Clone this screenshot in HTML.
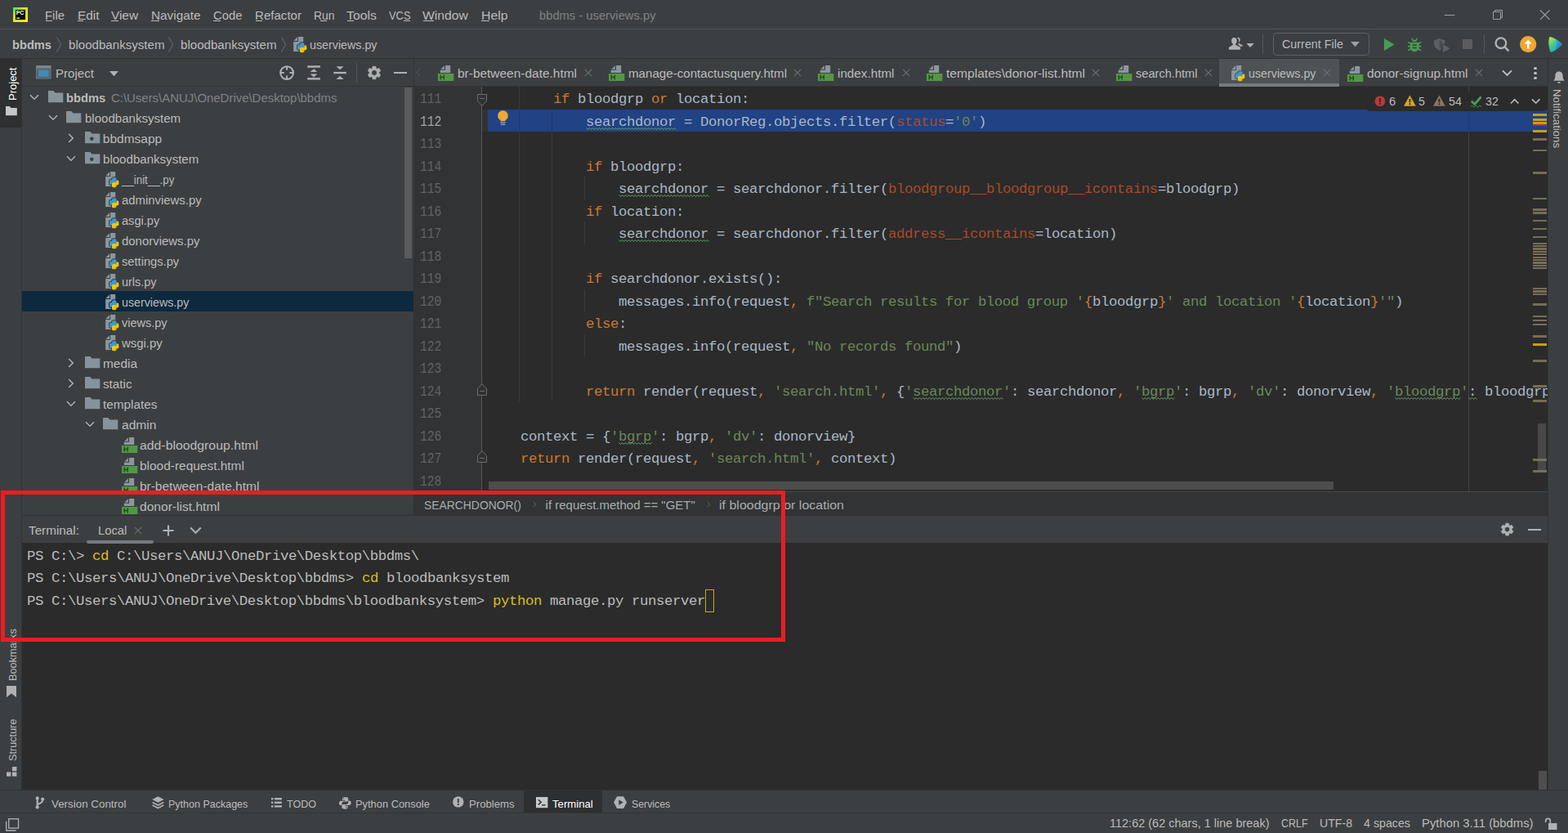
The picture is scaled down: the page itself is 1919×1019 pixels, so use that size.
<!DOCTYPE html>
<html lang="en"><head><meta charset="utf-8"><title>bbdms - userviews.py</title>
<style>
html,body{margin:0;padding:0;background:#3c3f41;}
body{width:1919px;height:1019px;overflow:hidden;font-family:"Liberation Sans",sans-serif;}
#root{position:relative;width:1919px;height:1019px;overflow:hidden;background:#3c3f41;}
#root>div,#root>svg,#root>span{position:absolute;}
.t{white-space:pre;line-height:20px;height:20px;transform-origin:0 50%;}
svg{overflow:visible;}
.c{position:absolute;white-space:pre;font-family:"Liberation Mono",monospace;font-size:17.4px;letter-spacing:-0.442px;line-height:27.5px;height:27.5px;}

</style></head>
<body>
<div id="root">
<div style="left:0px;top:35px;width:1919px;height:1px;background:#515355;"></div>
<div style="left:0px;top:71px;width:1919px;height:1px;background:#323232;"></div>
<div style="left:0px;top:72px;width:27px;height:894px;background:#3c3f41;"></div>
<div style="left:0px;top:72px;width:26px;height:83.5px;background:#2d2f30;"></div>
<div style="left:26px;top:72px;width:1px;height:894px;background:#323232;"></div>
<div style="left:1894px;top:72px;width:25px;height:894px;background:#3c3f41;"></div>
<div style="left:1894px;top:72px;width:1px;height:894px;background:#323232;"></div>
<div style="left:27px;top:105px;width:479px;height:1px;background:#323232;"></div>
<div style="left:506px;top:72px;width:1px;height:560px;background:#323232;"></div>
<div style="left:507px;top:106px;width:1387px;height:495px;background:#2b2b2b;"></div>
<div style="left:507px;top:106px;width:82.5px;height:495px;background:#313335;"></div>
<div style="left:507px;top:105px;width:1387px;height:1px;background:#323232;"></div>
<div style="left:507px;top:601px;width:1387px;height:1px;background:#4a4a4a;"></div>
<div style="left:507px;top:602px;width:1387px;height:29px;background:#313335;"></div>
<div style="left:27px;top:631px;width:1867px;height:33px;background:#3c3f41;"></div>
<div style="left:27px;top:630px;width:479px;height:1px;background:#323232;"></div>
<div style="left:27px;top:664px;width:1867px;height:302px;background:#2b2b2b;"></div>
<div style="left:0px;top:966px;width:1919px;height:1px;background:#323232;"></div>
<div style="left:0px;top:994px;width:1919px;height:1px;background:#323537;"></div>
<svg style="left:16px;top:9px" width="18" height="18" viewBox="0 0 18 18">
<defs><linearGradient id="pcg" x1="0" y1="0" x2="1" y2="1"><stop offset="0" stop-color="#3be06a"/><stop offset=".35" stop-color="#c8e628"/><stop offset="1" stop-color="#f5ee27"/></linearGradient></defs>
<rect width="18" height="18" fill="url(#pcg)"/><rect x="2.9" y="2.9" width="12.2" height="12.2" fill="#0a0a0a"/>
<text x="3.7" y="9.1" font-family="Liberation Sans, sans-serif" font-weight="bold" font-size="6.9" fill="#ffffff">PC</text>
<rect x="4.3" y="12.6" width="3.8" height="1.2" fill="#ffffff"/></svg>
<div style="left:56px;top:25px;width:8px;height:1px;background:#bbbbbb;"></div>
<div style="left:95px;top:25px;width:7px;height:1px;background:#bbbbbb;"></div>
<div style="left:136px;top:25px;width:9px;height:1px;background:#bbbbbb;"></div>
<div style="left:185px;top:25px;width:10px;height:1px;background:#bbbbbb;"></div>
<div style="left:261px;top:25px;width:9px;height:1px;background:#bbbbbb;"></div>
<div style="left:312.5px;top:25px;width:8px;height:1px;background:#bbbbbb;"></div>
<div style="left:391.5px;top:25px;width:8px;height:1px;background:#bbbbbb;"></div>
<div style="left:424.5px;top:25px;width:8px;height:1px;background:#bbbbbb;"></div>
<div style="left:494px;top:25px;width:7.5px;height:1px;background:#bbbbbb;"></div>
<div style="left:517.5px;top:25px;width:13px;height:1px;background:#bbbbbb;"></div>
<div style="left:589px;top:25px;width:10px;height:1px;background:#bbbbbb;"></div>
<svg style="left:1750px;top:0" width="169" height="35" viewBox="0 0 169 35" fill="none" stroke="#9da0a2" stroke-width="1"><path d="M17.8 18.5h12.6"/><path d="M77.5 14.5h9v9h-9z M79.5 14.5v-2h9v9h-2"/><path d="M135 12.300l11.500 11.500 M146.500 12.300l-11.500 11.500" stroke-width="1.2"/></svg>
<svg style="left:68.8px;top:45px" width="7" height="19" viewBox="0 0 7 19"><path d="M.5 .5L5.600 9.500L.5 18.500" fill="none" stroke="#6b6e70" stroke-width="1"/></svg>
<svg style="left:206.3px;top:45px" width="7" height="19" viewBox="0 0 7 19"><path d="M.5 .5L5.600 9.500L.5 18.500" fill="none" stroke="#6b6e70" stroke-width="1"/></svg>
<svg style="left:343.5px;top:45px" width="7" height="19" viewBox="0 0 7 19"><path d="M.5 .5L5.600 9.500L.5 18.500" fill="none" stroke="#6b6e70" stroke-width="1"/></svg>
<svg style="left:358.7px;top:45.1px" width="17" height="20" viewBox="0 0 17 20"><path d="M6.100 0H12.250V18H.15V5.900H6.100Z" fill="#8b979e"/><path d="M5.100 .2V4.900H.4Z" fill="#8b979e"/><g transform="translate(5.100 7.300) scale(.965 .99)"><g fill="#3c3f41" stroke="#3c3f41" stroke-width="1.900"><rect x="2.9" y="0" width="5.800" height="5.900" rx="1.700"/><rect x="0" y="2.900" width="8.700" height="3" rx="1.500"/><rect x="0" y="2.900" width="3.100" height="5.900" rx="1.500"/><rect x="2.900" y="6.100" width="5.800" height="5.900" rx="1.700"/><rect x="2.900" y="6.100" width="8.700" height="3" rx="1.500"/><rect x="8.500" y="3.200" width="3.100" height="5.900" rx="1.500"/></g><g fill="#3d9ad1"><rect x="2.9" y="0" width="5.800" height="5.900" rx="1.700"/><rect x="0" y="2.900" width="8.700" height="3" rx="1.500"/><rect x="0" y="2.900" width="3.100" height="5.900" rx="1.500"/></g><g fill="#f5c60c"><rect x="2.900" y="6.100" width="5.800" height="5.900" rx="1.700"/><rect x="2.900" y="6.100" width="8.700" height="3" rx="1.500"/><rect x="8.500" y="3.200" width="3.100" height="5.900" rx="1.500"/></g><circle cx="4.500" cy="1.500" r=".6" fill="#2a6f9c"/><circle cx="7.100" cy="10.500" r=".6" fill="#b38f00"/></g></svg>
<svg style="left:1503px;top:45px" width="33" height="17" viewBox="0 0 33 17">
<path d="M10.800 1.200c1.700-.9 3.700 0 4 2 .2 1.600-.5 2.800-1.300 3.700v1.200l4.300 2.100v1.600h-3.200l-2.500-2.300c1-1.400 1.400-3 1.100-5.100-.2-1.400-1.100-2.500-2.400-3.200z" fill="#a4a6a8"/>
<path d="M7.200.9c2.300 0 3.600 1.700 3.600 3.800 0 1.700-.7 3-1.600 3.900v1.300l5.300 2.600c.4.200.6.600.6 1v2.300H.9v-2.300c0-.4.200-.8.600-1l4.300-2.600V8.600C4.900 7.700 4.100 6.400 4.100 4.700 4.100 2.600 5.300.9 7.200.9z" fill="#afb1b3"/>
<path d="M22.400 8h9.400l-4.700 4.900z" fill="#afb1b3"/></svg>
<div style="left:1545px;top:42px;width:1px;height:24px;background:#555759;"></div>
<div style="left:1557.500px;top:40px;width:116.500px;height:26px;border:1px solid #5e6163;border-radius:4.500px;"></div>
<svg style="left:1653px;top:51px" width="11" height="7" viewBox="0 0 11 7"><path d="M0 0H11L5.500 6.300Z" fill="#9da0a2"/></svg>
<svg style="left:1693.700px;top:46.600px" width="13" height="15" viewBox="0 0 13 15"><path d="M0 0L12.500 7.450L0 14.900Z" fill="#499c54"/></svg>
<svg style="left:1723px;top:45.500px" width="17" height="18" viewBox="0 0 17 18">
<g fill="none" stroke="#499c54" stroke-width="1.500"><path d="M4.700 .6L6.600 3.400M11.700 .6L9.800 3.400"/><path d="M.3 5.600L3.600 7.400M16.100 5.600L12.800 7.400M0 10.600H3.400M16.400 10.600H13M.3 15.800L3.600 13.800M16.100 15.800L12.800 13.800" stroke-width="1.700"/></g>
<path d="M8.200 2.700c1.600 0 2.700 1 2.900 2.200H5.300c.2-1.200 1.300-2.200 2.900-2.200z" fill="#499c54"/>
<path d="M3.500 6h9.400c.4.900.6 2 .6 3.400v2.400c0 3.200-2.300 5.500-5.300 5.500s-5.300-2.300-5.300-5.500V9.400c0-1.400.2-2.500.6-3.400z" fill="#499c54"/>
<rect x="5.600" y="8.300" width="5.200" height="1.600" fill="#3c3f41"/><rect x="5.600" y="11.700" width="5.200" height="1.600" fill="#3c3f41"/></svg>
<svg style="left:1754.500px;top:46.500px" width="21" height="18" viewBox="0 0 21 18" fill="#5d6062">
<path d="M6.600 0L13.200 2.300V6.500H8.500V13.800L6.600 14.600C2.300 12.900 0 9.900 0 5.500V2.300Z"/>
<path d="M10.800 7L19.700 12.300L10.800 17.600Z"/><path d="M6.600 2v10.500c2.500-1 3.300-2.500 3.300-4V3.200z" fill="#4a4d4f"/></svg>
<div style="left:1789.5px;top:47.8px;width:12.8px;height:12.4px;background:#5b5d5f;"></div>
<div style="left:1816px;top:42px;width:1px;height:24px;background:#555759;"></div>
<svg style="left:1828px;top:44px" width="20" height="20" viewBox="0 0 20 20" fill="none" stroke="#afb1b3"><circle cx="8.900" cy="8.700" r="6.300" stroke-width="2.300"/><path d="M13.400 13.300L18.400 18.300" stroke-width="2.600"/></svg>
<svg style="left:1859.700px;top:43.700px" width="21" height="21" viewBox="0 0 21 21"><circle cx="10.200" cy="10.200" r="10.100" fill="#f0a732"/><path d="M10.200 4.800L14.700 9.600H11.400V15.400H9V9.600H5.700Z" fill="#ffffff"/></svg>
<svg style="left:1894px;top:44.500px" width="19" height="20" viewBox="0 0 19 20">
<defs><linearGradient id="lg1" x1="0" y1="0" x2="0.600" y2="1"><stop offset="0" stop-color="#c9e645"/><stop offset=".55" stop-color="#3fc88f"/><stop offset="1" stop-color="#19a8b8"/></linearGradient>
<linearGradient id="lg2" x1="0" y1="0" x2="1" y2="1"><stop offset="0" stop-color="#39b8e8"/><stop offset="1" stop-color="#1f5fc4"/></linearGradient></defs>
<path d="M2.500 0C7 .5 14 4.500 18 9.300 14 14 8 18 3.800 19 1.500 14 .3 6 2.500 0z" fill="url(#lg1)"/>
<path d="M9 3.200C12.500 4.800 16 7.300 18 9.300 15.500 12 12 15 9 16.500 11.500 12.500 11.500 7.500 9 3.200z" fill="url(#lg2)"/></svg>
<svg style="left:44px;top:80px" width="19" height="17" viewBox="0 0 19 17"><rect x=".5" y=".5" width="17.500" height="15.500" fill="#596168" stroke="#6e7980" stroke-width="1"/><rect x=".5" y=".5" width="17.500" height="3" fill="#7c8890"/><rect x="3" y="5.500" width="12.500" height="8.500" fill="#3e8cb5"/></svg>
<svg style="left:134px;top:86.500px" width="11" height="7" viewBox="0 0 11 7"><path d="M0 0H11L5.500 6.300Z" fill="#afb1b3"/></svg>
<svg style="left:341px;top:79px" width="21" height="21" viewBox="0 0 21 21" fill="none" stroke="#afb1b3" stroke-width="2"><circle cx="10.100" cy="10.100" r="7.900"/><path d="M10.100 2.200v4.600M10.100 13.400v4.600M2.200 10.100h4.600M13.400 10.100h4.600"/></svg>
<svg style="left:376px;top:80px" width="16" height="18" viewBox="0 0 16 18" fill="#afb1b3"><rect x=".2" y=".3" width="15.700" height="2.400"/><rect x=".2" y="15.100" width="15.700" height="2.400"/><path d="M8 4.300L12.400 8.100H3.600Z"/><path d="M8 14.400L12.400 10.600H3.600Z"/></svg>
<svg style="left:408px;top:80px" width="16" height="18" viewBox="0 0 16 18" fill="#afb1b3"><rect x=".3" y="7.900" width="15.500" height="2.300"/><path d="M8 5.200L12.500 1.200H3.500Z"/><path d="M8 13L12.500 17H3.500Z"/></svg>
<div style="left:436px;top:77px;width:1px;height:24px;background:#555759;"></div>
<svg style="left:449.0px;top:80.1px" width="18.0" height="18.0" viewBox="0 0 18.0 18.0"><path d="M6.89 3.49L7.13 1.22L10.87 1.22L11.11 3.49L12.71 4.41L14.80 3.49L16.67 6.73L14.83 8.08L14.83 9.92L16.67 11.27L14.80 14.51L12.71 13.59L11.11 14.51L10.87 16.78L7.13 16.78L6.89 14.51L5.29 13.59L3.20 14.51L1.33 11.27L3.17 9.92L3.17 8.08L1.33 6.73L3.20 3.49L5.29 4.41ZM5.60 9.0a3.4 3.4 0 1 0 6.8 0a3.4 3.4 0 1 0 -6.8 0Z" fill="#afb1b3" fill-rule="evenodd" stroke="#afb1b3" stroke-width="0.800" stroke-linejoin="round"/></svg>
<div style="left:482.4px;top:88px;width:15.5px;height:2.3px;background:#afb1b3;"></div>
<div style="left:27px;top:356px;width:479px;height:25px;background:#0d293e;"></div>
<svg style="left:36px;top:115.0px" width="12" height="8" viewBox="0 0 12 8"><path d="M1 1.200L6 6.200L11 1.200" fill="none" stroke="#afb1b3" stroke-width="1.500"/></svg>
<svg style="left:59px;top:111.0px" width="19" height="15" viewBox="0 0 19 15"><path d="M0 0H6.300L8.600 2.500H18.300V14.300H0Z" fill="#87939a"/></svg>
<svg style="left:58.8px;top:140.0px" width="12" height="8" viewBox="0 0 12 8"><path d="M1 1.200L6 6.200L11 1.200" fill="none" stroke="#afb1b3" stroke-width="1.500"/></svg>
<svg style="left:81px;top:136.0px" width="19" height="15" viewBox="0 0 19 15"><path d="M0 0H6.300L8.600 2.500H18.300V14.300H0Z" fill="#87939a"/></svg>
<svg style="left:83.2px;top:162.5px" width="8" height="12" viewBox="0 0 8 12"><path d="M1.200 1L6.200 6L1.200 11" fill="none" stroke="#afb1b3" stroke-width="1.500"/></svg>
<svg style="left:103.6px;top:161.0px" width="19" height="15" viewBox="0 0 19 15"><path d="M0 0H6.300L8.600 2.500H18.300V14.300H0Z" fill="#87939a"/><circle cx="8.300" cy="8.700" r="2.300" fill="#3c3f41"/></svg>
<svg style="left:80.9px;top:190.0px" width="12" height="8" viewBox="0 0 12 8"><path d="M1 1.200L6 6.200L11 1.200" fill="none" stroke="#afb1b3" stroke-width="1.500"/></svg>
<svg style="left:103.6px;top:186.0px" width="19" height="15" viewBox="0 0 19 15"><path d="M0 0H6.300L8.600 2.500H18.300V14.300H0Z" fill="#87939a"/><circle cx="8.300" cy="8.700" r="2.300" fill="#3c3f41"/></svg>
<svg style="left:128.7px;top:209.9px" width="17" height="20" viewBox="0 0 17 20"><path d="M6.100 0H12.250V18H.15V5.900H6.100Z" fill="#8b979e"/><path d="M5.100 .2V4.900H.4Z" fill="#8b979e"/><g transform="translate(5.100 7.300) scale(.965 .99)"><g fill="#3c3f41" stroke="#3c3f41" stroke-width="1.900"><rect x="2.9" y="0" width="5.800" height="5.900" rx="1.700"/><rect x="0" y="2.900" width="8.700" height="3" rx="1.500"/><rect x="0" y="2.900" width="3.100" height="5.900" rx="1.500"/><rect x="2.900" y="6.100" width="5.800" height="5.900" rx="1.700"/><rect x="2.900" y="6.100" width="8.700" height="3" rx="1.500"/><rect x="8.500" y="3.200" width="3.100" height="5.900" rx="1.500"/></g><g fill="#3d9ad1"><rect x="2.9" y="0" width="5.800" height="5.900" rx="1.700"/><rect x="0" y="2.900" width="8.700" height="3" rx="1.500"/><rect x="0" y="2.900" width="3.100" height="5.900" rx="1.500"/></g><g fill="#f5c60c"><rect x="2.900" y="6.100" width="5.800" height="5.900" rx="1.700"/><rect x="2.900" y="6.100" width="8.700" height="3" rx="1.500"/><rect x="8.500" y="3.200" width="3.100" height="5.900" rx="1.500"/></g><circle cx="4.500" cy="1.500" r=".6" fill="#2a6f9c"/><circle cx="7.100" cy="10.500" r=".6" fill="#b38f00"/></g></svg>
<svg style="left:128.7px;top:234.9px" width="17" height="20" viewBox="0 0 17 20"><path d="M6.100 0H12.250V18H.15V5.900H6.100Z" fill="#8b979e"/><path d="M5.100 .2V4.900H.4Z" fill="#8b979e"/><g transform="translate(5.100 7.300) scale(.965 .99)"><g fill="#3c3f41" stroke="#3c3f41" stroke-width="1.900"><rect x="2.9" y="0" width="5.800" height="5.900" rx="1.700"/><rect x="0" y="2.900" width="8.700" height="3" rx="1.500"/><rect x="0" y="2.900" width="3.100" height="5.900" rx="1.500"/><rect x="2.900" y="6.100" width="5.800" height="5.900" rx="1.700"/><rect x="2.900" y="6.100" width="8.700" height="3" rx="1.500"/><rect x="8.500" y="3.200" width="3.100" height="5.900" rx="1.500"/></g><g fill="#3d9ad1"><rect x="2.9" y="0" width="5.800" height="5.900" rx="1.700"/><rect x="0" y="2.900" width="8.700" height="3" rx="1.500"/><rect x="0" y="2.900" width="3.100" height="5.900" rx="1.500"/></g><g fill="#f5c60c"><rect x="2.900" y="6.100" width="5.800" height="5.900" rx="1.700"/><rect x="2.900" y="6.100" width="8.700" height="3" rx="1.500"/><rect x="8.500" y="3.200" width="3.100" height="5.900" rx="1.500"/></g><circle cx="4.500" cy="1.500" r=".6" fill="#2a6f9c"/><circle cx="7.100" cy="10.500" r=".6" fill="#b38f00"/></g></svg>
<svg style="left:128.7px;top:259.9px" width="17" height="20" viewBox="0 0 17 20"><path d="M6.100 0H12.250V18H.15V5.900H6.100Z" fill="#8b979e"/><path d="M5.100 .2V4.900H.4Z" fill="#8b979e"/><g transform="translate(5.100 7.300) scale(.965 .99)"><g fill="#3c3f41" stroke="#3c3f41" stroke-width="1.900"><rect x="2.9" y="0" width="5.800" height="5.900" rx="1.700"/><rect x="0" y="2.900" width="8.700" height="3" rx="1.500"/><rect x="0" y="2.900" width="3.100" height="5.900" rx="1.500"/><rect x="2.900" y="6.100" width="5.800" height="5.900" rx="1.700"/><rect x="2.900" y="6.100" width="8.700" height="3" rx="1.500"/><rect x="8.500" y="3.200" width="3.100" height="5.900" rx="1.500"/></g><g fill="#3d9ad1"><rect x="2.9" y="0" width="5.800" height="5.900" rx="1.700"/><rect x="0" y="2.900" width="8.700" height="3" rx="1.500"/><rect x="0" y="2.900" width="3.100" height="5.900" rx="1.500"/></g><g fill="#f5c60c"><rect x="2.900" y="6.100" width="5.800" height="5.900" rx="1.700"/><rect x="2.900" y="6.100" width="8.700" height="3" rx="1.500"/><rect x="8.500" y="3.200" width="3.100" height="5.900" rx="1.500"/></g><circle cx="4.500" cy="1.500" r=".6" fill="#2a6f9c"/><circle cx="7.100" cy="10.500" r=".6" fill="#b38f00"/></g></svg>
<svg style="left:128.7px;top:284.9px" width="17" height="20" viewBox="0 0 17 20"><path d="M6.100 0H12.250V18H.15V5.900H6.100Z" fill="#8b979e"/><path d="M5.100 .2V4.900H.4Z" fill="#8b979e"/><g transform="translate(5.100 7.300) scale(.965 .99)"><g fill="#3c3f41" stroke="#3c3f41" stroke-width="1.900"><rect x="2.9" y="0" width="5.800" height="5.900" rx="1.700"/><rect x="0" y="2.900" width="8.700" height="3" rx="1.500"/><rect x="0" y="2.900" width="3.100" height="5.900" rx="1.500"/><rect x="2.900" y="6.100" width="5.800" height="5.900" rx="1.700"/><rect x="2.900" y="6.100" width="8.700" height="3" rx="1.500"/><rect x="8.500" y="3.200" width="3.100" height="5.900" rx="1.500"/></g><g fill="#3d9ad1"><rect x="2.9" y="0" width="5.800" height="5.900" rx="1.700"/><rect x="0" y="2.900" width="8.700" height="3" rx="1.500"/><rect x="0" y="2.900" width="3.100" height="5.900" rx="1.500"/></g><g fill="#f5c60c"><rect x="2.900" y="6.100" width="5.800" height="5.900" rx="1.700"/><rect x="2.900" y="6.100" width="8.700" height="3" rx="1.500"/><rect x="8.500" y="3.200" width="3.100" height="5.900" rx="1.500"/></g><circle cx="4.500" cy="1.500" r=".6" fill="#2a6f9c"/><circle cx="7.100" cy="10.500" r=".6" fill="#b38f00"/></g></svg>
<svg style="left:128.7px;top:309.9px" width="17" height="20" viewBox="0 0 17 20"><path d="M6.100 0H12.250V18H.15V5.900H6.100Z" fill="#8b979e"/><path d="M5.100 .2V4.900H.4Z" fill="#8b979e"/><g transform="translate(5.100 7.300) scale(.965 .99)"><g fill="#3c3f41" stroke="#3c3f41" stroke-width="1.900"><rect x="2.9" y="0" width="5.800" height="5.900" rx="1.700"/><rect x="0" y="2.900" width="8.700" height="3" rx="1.500"/><rect x="0" y="2.900" width="3.100" height="5.900" rx="1.500"/><rect x="2.900" y="6.100" width="5.800" height="5.900" rx="1.700"/><rect x="2.900" y="6.100" width="8.700" height="3" rx="1.500"/><rect x="8.500" y="3.200" width="3.100" height="5.900" rx="1.500"/></g><g fill="#3d9ad1"><rect x="2.9" y="0" width="5.800" height="5.900" rx="1.700"/><rect x="0" y="2.900" width="8.700" height="3" rx="1.500"/><rect x="0" y="2.900" width="3.100" height="5.900" rx="1.500"/></g><g fill="#f5c60c"><rect x="2.900" y="6.100" width="5.800" height="5.900" rx="1.700"/><rect x="2.900" y="6.100" width="8.700" height="3" rx="1.500"/><rect x="8.500" y="3.200" width="3.100" height="5.900" rx="1.500"/></g><circle cx="4.500" cy="1.500" r=".6" fill="#2a6f9c"/><circle cx="7.100" cy="10.500" r=".6" fill="#b38f00"/></g></svg>
<svg style="left:128.7px;top:334.9px" width="17" height="20" viewBox="0 0 17 20"><path d="M6.100 0H12.250V18H.15V5.900H6.100Z" fill="#8b979e"/><path d="M5.100 .2V4.900H.4Z" fill="#8b979e"/><g transform="translate(5.100 7.300) scale(.965 .99)"><g fill="#3c3f41" stroke="#3c3f41" stroke-width="1.900"><rect x="2.9" y="0" width="5.800" height="5.900" rx="1.700"/><rect x="0" y="2.900" width="8.700" height="3" rx="1.500"/><rect x="0" y="2.900" width="3.100" height="5.900" rx="1.500"/><rect x="2.900" y="6.100" width="5.800" height="5.900" rx="1.700"/><rect x="2.900" y="6.100" width="8.700" height="3" rx="1.500"/><rect x="8.500" y="3.200" width="3.100" height="5.900" rx="1.500"/></g><g fill="#3d9ad1"><rect x="2.9" y="0" width="5.800" height="5.900" rx="1.700"/><rect x="0" y="2.900" width="8.700" height="3" rx="1.500"/><rect x="0" y="2.900" width="3.100" height="5.900" rx="1.500"/></g><g fill="#f5c60c"><rect x="2.900" y="6.100" width="5.800" height="5.900" rx="1.700"/><rect x="2.900" y="6.100" width="8.700" height="3" rx="1.500"/><rect x="8.500" y="3.200" width="3.100" height="5.900" rx="1.500"/></g><circle cx="4.500" cy="1.500" r=".6" fill="#2a6f9c"/><circle cx="7.100" cy="10.500" r=".6" fill="#b38f00"/></g></svg>
<svg style="left:128.7px;top:359.9px" width="17" height="20" viewBox="0 0 17 20"><path d="M6.100 0H12.250V18H.15V5.900H6.100Z" fill="#8b979e"/><path d="M5.100 .2V4.900H.4Z" fill="#8b979e"/><g transform="translate(5.100 7.300) scale(.965 .99)"><g fill="#0d293e" stroke="#0d293e" stroke-width="1.900"><rect x="2.9" y="0" width="5.800" height="5.900" rx="1.700"/><rect x="0" y="2.900" width="8.700" height="3" rx="1.500"/><rect x="0" y="2.900" width="3.100" height="5.900" rx="1.500"/><rect x="2.900" y="6.100" width="5.800" height="5.900" rx="1.700"/><rect x="2.900" y="6.100" width="8.700" height="3" rx="1.500"/><rect x="8.500" y="3.200" width="3.100" height="5.900" rx="1.500"/></g><g fill="#3d9ad1"><rect x="2.9" y="0" width="5.800" height="5.900" rx="1.700"/><rect x="0" y="2.900" width="8.700" height="3" rx="1.500"/><rect x="0" y="2.900" width="3.100" height="5.900" rx="1.500"/></g><g fill="#f5c60c"><rect x="2.900" y="6.100" width="5.800" height="5.900" rx="1.700"/><rect x="2.900" y="6.100" width="8.700" height="3" rx="1.500"/><rect x="8.500" y="3.200" width="3.100" height="5.900" rx="1.500"/></g><circle cx="4.500" cy="1.500" r=".6" fill="#2a6f9c"/><circle cx="7.100" cy="10.500" r=".6" fill="#b38f00"/></g></svg>
<svg style="left:128.7px;top:384.9px" width="17" height="20" viewBox="0 0 17 20"><path d="M6.100 0H12.250V18H.15V5.900H6.100Z" fill="#8b979e"/><path d="M5.100 .2V4.900H.4Z" fill="#8b979e"/><g transform="translate(5.100 7.300) scale(.965 .99)"><g fill="#3c3f41" stroke="#3c3f41" stroke-width="1.900"><rect x="2.9" y="0" width="5.800" height="5.900" rx="1.700"/><rect x="0" y="2.900" width="8.700" height="3" rx="1.500"/><rect x="0" y="2.900" width="3.100" height="5.900" rx="1.500"/><rect x="2.900" y="6.100" width="5.800" height="5.900" rx="1.700"/><rect x="2.900" y="6.100" width="8.700" height="3" rx="1.500"/><rect x="8.500" y="3.200" width="3.100" height="5.900" rx="1.500"/></g><g fill="#3d9ad1"><rect x="2.9" y="0" width="5.800" height="5.900" rx="1.700"/><rect x="0" y="2.900" width="8.700" height="3" rx="1.500"/><rect x="0" y="2.900" width="3.100" height="5.900" rx="1.500"/></g><g fill="#f5c60c"><rect x="2.900" y="6.100" width="5.800" height="5.900" rx="1.700"/><rect x="2.900" y="6.100" width="8.700" height="3" rx="1.500"/><rect x="8.500" y="3.200" width="3.100" height="5.900" rx="1.500"/></g><circle cx="4.500" cy="1.500" r=".6" fill="#2a6f9c"/><circle cx="7.100" cy="10.500" r=".6" fill="#b38f00"/></g></svg>
<svg style="left:128.7px;top:409.9px" width="17" height="20" viewBox="0 0 17 20"><path d="M6.100 0H12.250V18H.15V5.900H6.100Z" fill="#8b979e"/><path d="M5.100 .2V4.900H.4Z" fill="#8b979e"/><g transform="translate(5.100 7.300) scale(.965 .99)"><g fill="#3c3f41" stroke="#3c3f41" stroke-width="1.900"><rect x="2.9" y="0" width="5.800" height="5.900" rx="1.700"/><rect x="0" y="2.900" width="8.700" height="3" rx="1.500"/><rect x="0" y="2.900" width="3.100" height="5.900" rx="1.500"/><rect x="2.900" y="6.100" width="5.800" height="5.900" rx="1.700"/><rect x="2.900" y="6.100" width="8.700" height="3" rx="1.500"/><rect x="8.500" y="3.200" width="3.100" height="5.900" rx="1.500"/></g><g fill="#3d9ad1"><rect x="2.9" y="0" width="5.800" height="5.900" rx="1.700"/><rect x="0" y="2.900" width="8.700" height="3" rx="1.500"/><rect x="0" y="2.900" width="3.100" height="5.900" rx="1.500"/></g><g fill="#f5c60c"><rect x="2.900" y="6.100" width="5.800" height="5.900" rx="1.700"/><rect x="2.900" y="6.100" width="8.700" height="3" rx="1.500"/><rect x="8.500" y="3.200" width="3.100" height="5.900" rx="1.500"/></g><circle cx="4.500" cy="1.500" r=".6" fill="#2a6f9c"/><circle cx="7.100" cy="10.500" r=".6" fill="#b38f00"/></g></svg>
<svg style="left:83.2px;top:437.5px" width="8" height="12" viewBox="0 0 8 12"><path d="M1.200 1L6.200 6L1.200 11" fill="none" stroke="#afb1b3" stroke-width="1.500"/></svg>
<svg style="left:103.6px;top:436.0px" width="19" height="15" viewBox="0 0 19 15"><path d="M0 0H6.300L8.600 2.500H18.300V14.300H0Z" fill="#87939a"/></svg>
<svg style="left:83.2px;top:462.5px" width="8" height="12" viewBox="0 0 8 12"><path d="M1.200 1L6.200 6L1.200 11" fill="none" stroke="#afb1b3" stroke-width="1.500"/></svg>
<svg style="left:103.6px;top:461.0px" width="19" height="15" viewBox="0 0 19 15"><path d="M0 0H6.300L8.600 2.500H18.300V14.300H0Z" fill="#87939a"/></svg>
<svg style="left:80.9px;top:490.0px" width="12" height="8" viewBox="0 0 12 8"><path d="M1 1.200L6 6.200L11 1.200" fill="none" stroke="#afb1b3" stroke-width="1.500"/></svg>
<svg style="left:103.6px;top:486.0px" width="19" height="15" viewBox="0 0 19 15"><path d="M0 0H6.300L8.600 2.500H18.300V14.300H0Z" fill="#87939a"/></svg>
<svg style="left:103.8px;top:515.0px" width="12" height="8" viewBox="0 0 12 8"><path d="M1 1.200L6 6.200L11 1.200" fill="none" stroke="#afb1b3" stroke-width="1.500"/></svg>
<svg style="left:126px;top:511.0px" width="19" height="15" viewBox="0 0 19 15"><path d="M0 0H6.300L8.600 2.500H18.300V14.300H0Z" fill="#87939a"/></svg>
<svg style="left:149.2px;top:535.0px" width="20" height="20" viewBox="0 0 20 20"><path d="M9.100 0H15.200V9H2.800V5.850H9.100Z" fill="#8b979e"/><path d="M7.900 .2V4.800H3.300Z" fill="#8b979e"/><rect x="0" y="10" width="19.300" height="9" fill="#529843"/><path d="M3.200 11.600v5.900M7.300 11.600v5.900M3.200 14.500h4.100" stroke="#1f4d1c" stroke-width="1.400" fill="none"/></svg>
<svg style="left:149.2px;top:560.0px" width="20" height="20" viewBox="0 0 20 20"><path d="M9.100 0H15.200V9H2.800V5.850H9.100Z" fill="#8b979e"/><path d="M7.900 .2V4.800H3.300Z" fill="#8b979e"/><rect x="0" y="10" width="19.300" height="9" fill="#529843"/><path d="M3.200 11.600v5.900M7.300 11.600v5.900M3.200 14.500h4.100" stroke="#1f4d1c" stroke-width="1.400" fill="none"/></svg>
<svg style="left:149.2px;top:585.0px" width="20" height="20" viewBox="0 0 20 20"><path d="M9.100 0H15.200V9H2.800V5.850H9.100Z" fill="#8b979e"/><path d="M7.900 .2V4.800H3.300Z" fill="#8b979e"/><rect x="0" y="10" width="19.300" height="9" fill="#529843"/><path d="M3.200 11.600v5.900M7.300 11.600v5.900M3.200 14.500h4.100" stroke="#1f4d1c" stroke-width="1.400" fill="none"/></svg>
<svg style="left:149.2px;top:610.0px" width="20" height="20" viewBox="0 0 20 20"><path d="M9.100 0H15.200V9H2.800V5.850H9.100Z" fill="#8b979e"/><path d="M7.900 .2V4.800H3.300Z" fill="#8b979e"/><rect x="0" y="10" width="19.300" height="9" fill="#529843"/><path d="M3.200 11.600v5.900M7.300 11.600v5.900M3.200 14.500h4.100" stroke="#1f4d1c" stroke-width="1.400" fill="none"/></svg>
<div style="left:494.5px;top:107px;width:9.5px;height:209px;background:#595b5d;"></div>
<div style="left:1491.5px;top:72px;width:147.5px;height:33px;background:#4e5254;"></div>
<div style="left:1491.5px;top:102px;width:147.5px;height:3.5px;background:#747a80;"></div>
<svg style="left:535.9px;top:80px" width="20" height="20" viewBox="0 0 20 20"><path d="M9.100 0H15.200V9H2.800V5.850H9.100Z" fill="#8b979e"/><path d="M7.900 .2V4.800H3.300Z" fill="#8b979e"/><rect x="0" y="10" width="19.300" height="9" fill="#529843"/><path d="M3.200 11.600v5.900M7.300 11.600v5.900M3.200 14.500h4.100" stroke="#1f4d1c" stroke-width="1.400" fill="none"/></svg>
<svg style="left:714.5px;top:84px" width="10" height="10" viewBox="0 0 10 10"><path d="M.8 .8L9.200 9.200M9.200 .8L.8 9.200" stroke="#6e7173" stroke-width="1.100" fill="none"/></svg>
<svg style="left:745px;top:80px" width="20" height="20" viewBox="0 0 20 20"><path d="M9.100 0H15.200V9H2.800V5.850H9.100Z" fill="#8b979e"/><path d="M7.900 .2V4.800H3.300Z" fill="#8b979e"/><rect x="0" y="10" width="19.300" height="9" fill="#529843"/><path d="M3.200 11.600v5.900M7.300 11.600v5.900M3.200 14.500h4.100" stroke="#1f4d1c" stroke-width="1.400" fill="none"/></svg>
<svg style="left:971px;top:84px" width="10" height="10" viewBox="0 0 10 10"><path d="M.8 .8L9.200 9.200M9.200 .8L.8 9.200" stroke="#6e7173" stroke-width="1.100" fill="none"/></svg>
<svg style="left:1001px;top:80px" width="20" height="20" viewBox="0 0 20 20"><path d="M9.100 0H15.200V9H2.800V5.850H9.100Z" fill="#8b979e"/><path d="M7.900 .2V4.800H3.300Z" fill="#8b979e"/><rect x="0" y="10" width="19.300" height="9" fill="#529843"/><path d="M3.200 11.600v5.900M7.300 11.600v5.900M3.200 14.500h4.100" stroke="#1f4d1c" stroke-width="1.400" fill="none"/></svg>
<svg style="left:1103.5px;top:84px" width="10" height="10" viewBox="0 0 10 10"><path d="M.8 .8L9.200 9.200M9.200 .8L.8 9.200" stroke="#6e7173" stroke-width="1.100" fill="none"/></svg>
<svg style="left:1134px;top:80px" width="20" height="20" viewBox="0 0 20 20"><path d="M9.100 0H15.200V9H2.800V5.850H9.100Z" fill="#8b979e"/><path d="M7.900 .2V4.800H3.300Z" fill="#8b979e"/><rect x="0" y="10" width="19.300" height="9" fill="#529843"/><path d="M3.200 11.600v5.900M7.300 11.600v5.900M3.200 14.500h4.100" stroke="#1f4d1c" stroke-width="1.400" fill="none"/></svg>
<svg style="left:1336px;top:84px" width="10" height="10" viewBox="0 0 10 10"><path d="M.8 .8L9.200 9.200M9.200 .8L.8 9.200" stroke="#6e7173" stroke-width="1.100" fill="none"/></svg>
<svg style="left:1366px;top:80px" width="20" height="20" viewBox="0 0 20 20"><path d="M9.100 0H15.200V9H2.800V5.850H9.100Z" fill="#8b979e"/><path d="M7.900 .2V4.800H3.300Z" fill="#8b979e"/><rect x="0" y="10" width="19.300" height="9" fill="#529843"/><path d="M3.200 11.600v5.900M7.300 11.600v5.900M3.200 14.500h4.100" stroke="#1f4d1c" stroke-width="1.400" fill="none"/></svg>
<svg style="left:1474px;top:84px" width="10" height="10" viewBox="0 0 10 10"><path d="M.8 .8L9.200 9.200M9.200 .8L.8 9.200" stroke="#6e7173" stroke-width="1.100" fill="none"/></svg>
<svg style="left:1506.5px;top:80px" width="17" height="20" viewBox="0 0 17 20"><path d="M6.100 0H12.250V18H.15V5.900H6.100Z" fill="#8b979e"/><path d="M5.100 .2V4.900H.4Z" fill="#8b979e"/><g transform="translate(5.100 7.300) scale(.965 .99)"><g fill="#4e5254" stroke="#4e5254" stroke-width="1.900"><rect x="2.9" y="0" width="5.800" height="5.900" rx="1.700"/><rect x="0" y="2.900" width="8.700" height="3" rx="1.500"/><rect x="0" y="2.900" width="3.100" height="5.900" rx="1.500"/><rect x="2.900" y="6.100" width="5.800" height="5.900" rx="1.700"/><rect x="2.900" y="6.100" width="8.700" height="3" rx="1.500"/><rect x="8.500" y="3.200" width="3.100" height="5.900" rx="1.500"/></g><g fill="#3d9ad1"><rect x="2.9" y="0" width="5.800" height="5.900" rx="1.700"/><rect x="0" y="2.900" width="8.700" height="3" rx="1.500"/><rect x="0" y="2.900" width="3.100" height="5.900" rx="1.500"/></g><g fill="#f5c60c"><rect x="2.900" y="6.100" width="5.800" height="5.900" rx="1.700"/><rect x="2.900" y="6.100" width="8.700" height="3" rx="1.500"/><rect x="8.500" y="3.200" width="3.100" height="5.900" rx="1.500"/></g><circle cx="4.500" cy="1.500" r=".6" fill="#2a6f9c"/><circle cx="7.100" cy="10.500" r=".6" fill="#b38f00"/></g></svg>
<svg style="left:1619px;top:84px" width="10" height="10" viewBox="0 0 10 10"><path d="M.8 .8L9.200 9.200M9.200 .8L.8 9.200" stroke="#6e7173" stroke-width="1.100" fill="none"/></svg>
<svg style="left:1649px;top:81px" width="20" height="20" viewBox="0 0 20 20"><path d="M9.100 0H15.200V9H2.800V5.850H9.100Z" fill="#8b979e"/><path d="M7.900 .2V4.800H3.300Z" fill="#8b979e"/><rect x="0" y="10" width="19.300" height="9" fill="#529843"/><path d="M3.200 11.600v5.900M7.300 11.600v5.900M3.200 14.500h4.100" stroke="#1f4d1c" stroke-width="1.400" fill="none"/></svg>
<svg style="left:1805px;top:84px" width="10" height="10" viewBox="0 0 10 10"><path d="M.8 .8L9.200 9.200M9.200 .8L.8 9.200" stroke="#6e7173" stroke-width="1.100" fill="none"/></svg>
<svg style="left:509px;top:83px" width="6" height="11" viewBox="0 0 6 11"><path d="M5 .8L1 5.500L5 10.200" stroke="#505355" stroke-width="1.200" fill="none"/></svg>
<svg style="left:1837.500px;top:84.500px" width="13" height="9" viewBox="0 0 13 9"><path d="M1 1.300L6.500 6.800L12 1.300" stroke="#c0c2c4" stroke-width="1.900" fill="none"/></svg>
<div style="left:1877.300px;top:81.5px;width:3.400px;height:3.400px;border-radius:50%;background:#c0c2c4"></div>
<div style="left:1877.300px;top:87.8px;width:3.400px;height:3.400px;border-radius:50%;background:#c0c2c4"></div>
<div style="left:1877.300px;top:94.1px;width:3.400px;height:3.400px;border-radius:50%;background:#c0c2c4"></div>
<div style="left:597px;top:134.0px;width:1297px;height:27.0px;background:#214283;"></div>
<div style="left:590px;top:134.0px;width:7px;height:27.0px;background:#323232;"></div>
<div style="left:1797px;top:106px;width:1px;height:495px;background:#444444;"></div>
<div style="left:1797px;top:134.0px;width:1px;height:27.0px;background:#1d3a73;"></div>
<div style="left:589px;top:106px;width:1px;height:495px;background:#555759;"></div>
<div style="left:635px;top:106.0px;width:1px;height:385.0px;background:#3b3b3b;"></div>
<div style="left:675px;top:133.5px;width:1px;height:357.5px;background:#3b3b3b;"></div>
<div style="left:635px;top:134.0px;width:1px;height:27.0px;background:#1b376f;"></div>
<div style="left:675px;top:134.0px;width:1px;height:27.0px;background:#1b376f;"></div>
<div style="left:715px;top:216.0px;width:1px;height:27.5px;background:#3b3b3b;"></div>
<div style="left:715px;top:271.0px;width:1px;height:27.5px;background:#3b3b3b;"></div>
<div style="left:715px;top:353.5px;width:1px;height:27.5px;background:#3b3b3b;"></div>
<div style="left:715px;top:408.5px;width:1px;height:27.5px;background:#3b3b3b;"></div>
<svg style="left:584px;top:114.55px" width="12" height="15" viewBox="0 0 12 15"><path d="M.5 .5H11.500V8.500L6 14.500L.5 8.500Z" fill="#2f3133" stroke="#6a6d6f" stroke-width="1"/><path d="M3 5.5H9" stroke="#6a6d6f" stroke-width="1"/></svg>
<svg style="left:584px;top:468.95px" width="12" height="15" viewBox="0 0 12 15"><path d="M.5 14.500H11.500V6.500L6 .5L.5 6.500Z" fill="#2f3133" stroke="#6a6d6f" stroke-width="1"/><path d="M3 9.5H9" stroke="#6a6d6f" stroke-width="1"/></svg>
<svg style="left:584px;top:551.45px" width="12" height="15" viewBox="0 0 12 15"><path d="M.5 14.500H11.500V6.500L6 .5L.5 6.500Z" fill="#2f3133" stroke="#6a6d6f" stroke-width="1"/><path d="M3 9.5H9" stroke="#6a6d6f" stroke-width="1"/></svg>
<svg style="left:607.500px;top:134.50px" width="15" height="19" viewBox="0 0 15 19"><path d="M7.500 .3a6.300 6.300 0 0 1 3.500 11.500c-.5.400-.7.900-.7 1.500H4.700c0-.6-.2-1.100-.7-1.500A6.300 6.300 0 0 1 7.500.3z" fill="#f0a732"/><rect x="4.300" y="14.300" width="6.400" height="1.300" fill="#9aa7b0"/><rect x="4.800" y="16.600" width="5.400" height="1.300" fill="#9aa7b0"/></svg>
<div style="left:0;top:0;width:1894px;height:601px;overflow:hidden;background:none;pointer-events:none"><div style="position:absolute;left:0;top:0"><span class="c" style="left:677.0px;top:108.40px;color:#cc7832">if</span><span class="c" style="left:707.0px;top:108.40px;color:#a9b7c6">bloodgrp</span><span class="c" style="left:797.0px;top:108.40px;color:#cc7832">or</span><span class="c" style="left:827.0px;top:108.40px;color:#a9b7c6">location:</span><svg style="position:absolute;left:717.0px;top:156px" width="110" height="4" viewBox="0 0 110 4"><path d="M0.5 0.5L2.5 2.5L4.5 0.5L6.5 2.5L8.5 0.5L10.5 2.5L12.5 0.5L14.5 2.5L16.5 0.5L18.5 2.5L20.5 0.5L22.5 2.5L24.5 0.5L26.5 2.5L28.5 0.5L30.5 2.5L32.5 0.5L34.5 2.5L36.5 0.5L38.5 2.5L40.5 0.5L42.5 2.5L44.5 0.5L46.5 2.5L48.5 0.5L50.5 2.5L52.5 0.5L54.5 2.5L56.5 0.5L58.5 2.5L60.5 0.5L62.5 2.5L64.5 0.5L66.5 2.5L68.5 0.5L70.5 2.5L72.5 0.5L74.5 2.5L76.5 0.5L78.5 2.5L80.5 0.5L82.5 2.5L84.5 0.5L86.5 2.5L88.5 0.5L90.5 2.5L92.5 0.5L94.5 2.5L96.5 0.5L98.5 2.5L100.5 0.5L102.5 2.5L104.5 0.5L106.5 2.5L108.5 0.5L110.5 2.5" fill="none" stroke="#66a869" stroke-width="1"/></svg><span class="c" style="left:717.0px;top:135.90px;color:#a9b7c6">searchdonor</span><span class="c" style="left:837.0px;top:135.90px;color:#a9b7c6">= DonorReg.objects.filter(</span><span class="c" style="left:1097.0px;top:135.90px;color:#aa4926">status</span><span class="c" style="left:1157.0px;top:135.90px;color:#a9b7c6">=</span><span class="c" style="left:1167.0px;top:135.90px;color:#6a8759">&#x27;0&#x27;</span><span class="c" style="left:1197.0px;top:135.90px;color:#a9b7c6">)</span><span class="c" style="left:717.0px;top:190.90px;color:#cc7832">if</span><span class="c" style="left:747.0px;top:190.90px;color:#a9b7c6">bloodgrp:</span><svg style="position:absolute;left:757.0px;top:238px" width="110" height="4" viewBox="0 0 110 4"><path d="M0.5 0.5L2.5 2.5L4.5 0.5L6.5 2.5L8.5 0.5L10.5 2.5L12.5 0.5L14.5 2.5L16.5 0.5L18.5 2.5L20.5 0.5L22.5 2.5L24.5 0.5L26.5 2.5L28.5 0.5L30.5 2.5L32.5 0.5L34.5 2.5L36.5 0.5L38.5 2.5L40.5 0.5L42.5 2.5L44.5 0.5L46.5 2.5L48.5 0.5L50.5 2.5L52.5 0.5L54.5 2.5L56.5 0.5L58.5 2.5L60.5 0.5L62.5 2.5L64.5 0.5L66.5 2.5L68.5 0.5L70.5 2.5L72.5 0.5L74.5 2.5L76.5 0.5L78.5 2.5L80.5 0.5L82.5 2.5L84.5 0.5L86.5 2.5L88.5 0.5L90.5 2.5L92.5 0.5L94.5 2.5L96.5 0.5L98.5 2.5L100.5 0.5L102.5 2.5L104.5 0.5L106.5 2.5L108.5 0.5L110.5 2.5" fill="none" stroke="#66a869" stroke-width="1"/></svg><span class="c" style="left:757.0px;top:218.40px;color:#a9b7c6">searchdonor</span><span class="c" style="left:877.0px;top:218.40px;color:#a9b7c6">= searchdonor.filter(</span><span class="c" style="left:1087.0px;top:218.40px;color:#aa4926">bloodgroup__bloodgroup__icontains</span><span class="c" style="left:1417.0px;top:218.40px;color:#a9b7c6">=bloodgrp)</span><span class="c" style="left:717.0px;top:245.90px;color:#cc7832">if</span><span class="c" style="left:747.0px;top:245.90px;color:#a9b7c6">location:</span><svg style="position:absolute;left:757.0px;top:293px" width="110" height="4" viewBox="0 0 110 4"><path d="M0.5 0.5L2.5 2.5L4.5 0.5L6.5 2.5L8.5 0.5L10.5 2.5L12.5 0.5L14.5 2.5L16.5 0.5L18.5 2.5L20.5 0.5L22.5 2.5L24.5 0.5L26.5 2.5L28.5 0.5L30.5 2.5L32.5 0.5L34.5 2.5L36.5 0.5L38.5 2.5L40.5 0.5L42.5 2.5L44.5 0.5L46.5 2.5L48.5 0.5L50.5 2.5L52.5 0.5L54.5 2.5L56.5 0.5L58.5 2.5L60.5 0.5L62.5 2.5L64.5 0.5L66.5 2.5L68.5 0.5L70.5 2.5L72.5 0.5L74.5 2.5L76.5 0.5L78.5 2.5L80.5 0.5L82.5 2.5L84.5 0.5L86.5 2.5L88.5 0.5L90.5 2.5L92.5 0.5L94.5 2.5L96.5 0.5L98.5 2.5L100.5 0.5L102.5 2.5L104.5 0.5L106.5 2.5L108.5 0.5L110.5 2.5" fill="none" stroke="#66a869" stroke-width="1"/></svg><span class="c" style="left:757.0px;top:273.40px;color:#a9b7c6">searchdonor</span><span class="c" style="left:877.0px;top:273.40px;color:#a9b7c6">= searchdonor.filter(</span><span class="c" style="left:1087.0px;top:273.40px;color:#aa4926">address__icontains</span><span class="c" style="left:1267.0px;top:273.40px;color:#a9b7c6">=location)</span><span class="c" style="left:717.0px;top:328.40px;color:#cc7832">if</span><span class="c" style="left:747.0px;top:328.40px;color:#a9b7c6">searchdonor.exists():</span><span class="c" style="left:757.0px;top:355.90px;color:#a9b7c6">messages.info(request</span><span class="c" style="left:967.0px;top:355.90px;color:#cc7832">,</span><span class="c" style="left:987.0px;top:355.90px;color:#6a8759">f&quot;Search results for blood group &#x27;</span><span class="c" style="left:1327.0px;top:355.90px;color:#cc7832">{</span><span class="c" style="left:1337.0px;top:355.90px;color:#a9b7c6">bloodgrp</span><span class="c" style="left:1417.0px;top:355.90px;color:#cc7832">}</span><span class="c" style="left:1427.0px;top:355.90px;color:#6a8759">&#x27; and location &#x27;</span><span class="c" style="left:1587.0px;top:355.90px;color:#cc7832">{</span><span class="c" style="left:1597.0px;top:355.90px;color:#a9b7c6">location</span><span class="c" style="left:1677.0px;top:355.90px;color:#cc7832">}</span><span class="c" style="left:1687.0px;top:355.90px;color:#6a8759">&#x27;&quot;</span><span class="c" style="left:1707.0px;top:355.90px;color:#a9b7c6">)</span><span class="c" style="left:717.0px;top:383.40px;color:#cc7832">else</span><span class="c" style="left:757.0px;top:383.40px;color:#a9b7c6">:</span><span class="c" style="left:757.0px;top:410.90px;color:#a9b7c6">messages.info(request</span><span class="c" style="left:967.0px;top:410.90px;color:#cc7832">,</span><span class="c" style="left:987.0px;top:410.90px;color:#6a8759">&quot;No records found&quot;</span><span class="c" style="left:1167.0px;top:410.90px;color:#a9b7c6">)</span><span class="c" style="left:717.0px;top:465.90px;color:#cc7832">return</span><span class="c" style="left:787.0px;top:465.90px;color:#a9b7c6">render(request</span><span class="c" style="left:927.0px;top:465.90px;color:#cc7832">,</span><span class="c" style="left:947.0px;top:465.90px;color:#6a8759">&#x27;search.html&#x27;</span><span class="c" style="left:1077.0px;top:465.90px;color:#cc7832">,</span><span class="c" style="left:1097.0px;top:465.90px;color:#a9b7c6">{</span><span class="c" style="left:1107.0px;top:465.90px;color:#6a8759">&#x27;</span><svg style="position:absolute;left:1117.0px;top:486px" width="110" height="4" viewBox="0 0 110 4"><path d="M0.5 0.5L2.5 2.5L4.5 0.5L6.5 2.5L8.5 0.5L10.5 2.5L12.5 0.5L14.5 2.5L16.5 0.5L18.5 2.5L20.5 0.5L22.5 2.5L24.5 0.5L26.5 2.5L28.5 0.5L30.5 2.5L32.5 0.5L34.5 2.5L36.5 0.5L38.5 2.5L40.5 0.5L42.5 2.5L44.5 0.5L46.5 2.5L48.5 0.5L50.5 2.5L52.5 0.5L54.5 2.5L56.5 0.5L58.5 2.5L60.5 0.5L62.5 2.5L64.5 0.5L66.5 2.5L68.5 0.5L70.5 2.5L72.5 0.5L74.5 2.5L76.5 0.5L78.5 2.5L80.5 0.5L82.5 2.5L84.5 0.5L86.5 2.5L88.5 0.5L90.5 2.5L92.5 0.5L94.5 2.5L96.5 0.5L98.5 2.5L100.5 0.5L102.5 2.5L104.5 0.5L106.5 2.5L108.5 0.5L110.5 2.5" fill="none" stroke="#66a869" stroke-width="1"/></svg><span class="c" style="left:1117.0px;top:465.90px;color:#6a8759">searchdonor</span><span class="c" style="left:1227.0px;top:465.90px;color:#6a8759">&#x27;</span><span class="c" style="left:1237.0px;top:465.90px;color:#a9b7c6">: searchdonor</span><span class="c" style="left:1367.0px;top:465.90px;color:#cc7832">,</span><span class="c" style="left:1387.0px;top:465.90px;color:#6a8759">&#x27;</span><svg style="position:absolute;left:1397.0px;top:486px" width="40" height="4" viewBox="0 0 40 4"><path d="M0.5 0.5L2.5 2.5L4.5 0.5L6.5 2.5L8.5 0.5L10.5 2.5L12.5 0.5L14.5 2.5L16.5 0.5L18.5 2.5L20.5 0.5L22.5 2.5L24.5 0.5L26.5 2.5L28.5 0.5L30.5 2.5L32.5 0.5L34.5 2.5L36.5 0.5L38.5 2.5L40.5 0.5" fill="none" stroke="#66a869" stroke-width="1"/></svg><span class="c" style="left:1397.0px;top:465.90px;color:#6a8759">bgrp</span><span class="c" style="left:1437.0px;top:465.90px;color:#6a8759">&#x27;</span><span class="c" style="left:1447.0px;top:465.90px;color:#a9b7c6">: bgrp</span><span class="c" style="left:1507.0px;top:465.90px;color:#cc7832">,</span><span class="c" style="left:1527.0px;top:465.90px;color:#6a8759">&#x27;dv&#x27;</span><span class="c" style="left:1567.0px;top:465.90px;color:#a9b7c6">: donorview</span><span class="c" style="left:1677.0px;top:465.90px;color:#cc7832">,</span><span class="c" style="left:1697.0px;top:465.90px;color:#6a8759">&#x27;</span><svg style="position:absolute;left:1707.0px;top:486px" width="80" height="4" viewBox="0 0 80 4"><path d="M0.5 0.5L2.5 2.5L4.5 0.5L6.5 2.5L8.5 0.5L10.5 2.5L12.5 0.5L14.5 2.5L16.5 0.5L18.5 2.5L20.5 0.5L22.5 2.5L24.5 0.5L26.5 2.5L28.5 0.5L30.5 2.5L32.5 0.5L34.5 2.5L36.5 0.5L38.5 2.5L40.5 0.5L42.5 2.5L44.5 0.5L46.5 2.5L48.5 0.5L50.5 2.5L52.5 0.5L54.5 2.5L56.5 0.5L58.5 2.5L60.5 0.5L62.5 2.5L64.5 0.5L66.5 2.5L68.5 0.5L70.5 2.5L72.5 0.5L74.5 2.5L76.5 0.5L78.5 2.5L80.5 0.5" fill="none" stroke="#66a869" stroke-width="1"/></svg><span class="c" style="left:1707.0px;top:465.90px;color:#6a8759">bloodgrp</span><span class="c" style="left:1787.0px;top:465.90px;color:#6a8759">&#x27;</span><svg style="position:absolute;left:1797.0px;top:486px" width="10" height="4" viewBox="0 0 10 4"><path d="M0.5 0.5L2.5 2.5L4.5 0.5L6.5 2.5L8.5 0.5L10.5 2.5" fill="none" stroke="#66a869" stroke-width="1"/></svg><span class="c" style="left:1797.0px;top:465.90px;color:#a9b7c6">:</span><span class="c" style="left:1817.0px;top:465.90px;color:#a9b7c6">bloodgrp</span><span class="c" style="left:637.0px;top:520.90px;color:#a9b7c6">context = {</span><span class="c" style="left:747.0px;top:520.90px;color:#6a8759">&#x27;</span><svg style="position:absolute;left:757.0px;top:541px" width="40" height="4" viewBox="0 0 40 4"><path d="M0.5 0.5L2.5 2.5L4.5 0.5L6.5 2.5L8.5 0.5L10.5 2.5L12.5 0.5L14.5 2.5L16.5 0.5L18.5 2.5L20.5 0.5L22.5 2.5L24.5 0.5L26.5 2.5L28.5 0.5L30.5 2.5L32.5 0.5L34.5 2.5L36.5 0.5L38.5 2.5L40.5 0.5" fill="none" stroke="#66a869" stroke-width="1"/></svg><span class="c" style="left:757.0px;top:520.90px;color:#6a8759">bgrp</span><span class="c" style="left:797.0px;top:520.90px;color:#6a8759">&#x27;</span><span class="c" style="left:807.0px;top:520.90px;color:#a9b7c6">: bgrp</span><span class="c" style="left:867.0px;top:520.90px;color:#cc7832">,</span><span class="c" style="left:887.0px;top:520.90px;color:#6a8759">&#x27;dv&#x27;</span><span class="c" style="left:927.0px;top:520.90px;color:#a9b7c6">: donorview}</span><span class="c" style="left:637.0px;top:548.40px;color:#cc7832">return</span><span class="c" style="left:707.0px;top:548.40px;color:#a9b7c6">render(request</span><span class="c" style="left:847.0px;top:548.40px;color:#cc7832">,</span><span class="c" style="left:867.0px;top:548.40px;color:#6a8759">&#x27;search.html&#x27;</span><span class="c" style="left:997.0px;top:548.40px;color:#cc7832">,</span><span class="c" style="left:1017.0px;top:548.40px;color:#a9b7c6">context)</span></div></div>
<div style="left:1671px;top:106px;width:223px;height:30px;background:#2b2b2b;border-radius:0 0 5px 6px;"></div>
<div style="left:1797px;top:106px;width:1px;height:6px;background:#444444;"></div>
<svg style="left:1682px;top:116.500px" width="14" height="14" viewBox="0 0 14 14"><circle cx="6.900" cy="6.700" r="6.300" fill="#bb3a36"/><rect x="5.900" y="3" width="2" height="4.800" fill="#2b2b2b"/><rect x="5.900" y="8.800" width="2" height="2" fill="#2b2b2b"/></svg>
<svg style="left:1717.6px;top:115.500px" width="16" height="15" viewBox="0 0 16 15"><path d="M7.400 .4L14.800 13.700H0Z" fill="#d9a71e"/><rect x="6.500" y="5" width="1.900" height="4.300" fill="#2b2b2b"/><rect x="6.500" y="10.300" width="1.900" height="1.900" fill="#2b2b2b"/></svg>
<svg style="left:1753.5px;top:115.500px" width="16" height="15" viewBox="0 0 16 15"><path d="M7.400 .4L14.800 13.700H0Z" fill="#857a63"/><rect x="6.500" y="5" width="1.900" height="4.300" fill="#2b2b2b"/><rect x="6.500" y="10.300" width="1.900" height="1.900" fill="#2b2b2b"/></svg>
<svg style="left:1798.500px;top:116.500px" width="16" height="16" viewBox="0 0 16 16" fill="none"><path d="M1.800 6.800L5.800 10.300L13.600 1.500" stroke="#49a155" stroke-width="2.700"/><path d="M.6 13.500L2.700 12L5 14.300L7.300 12L9.600 14.300L11.900 12L14 13.500" stroke="#3f8f49" stroke-width="1"/></svg>
<svg style="left:1847.500px;top:119.500px" width="12" height="8" viewBox="0 0 12 8"><path d="M1 6.500L5.700 1.700L10.400 6.500" stroke="#b4b6b8" stroke-width="1.700" fill="none"/></svg>
<svg style="left:1873.500px;top:120px" width="12" height="8" viewBox="0 0 12 8"><path d="M1 1.300L5.700 6.100L10.400 1.300" stroke="#b4b6b8" stroke-width="1.700" fill="none"/></svg>
<div style="left:1876px;top:139px;width:17px;height:3px;background:#c79e1c;"></div>
<div style="left:1876px;top:145.4px;width:17px;height:2.6px;background:#c79e1c;"></div>
<div style="left:1876px;top:149.1px;width:17px;height:2.5px;background:#c79e1c;"></div>
<div style="left:1876px;top:151.7px;width:17px;height:2.4px;background:#b0322c;"></div>
<div style="left:1876px;top:159.2px;width:17px;height:2.8px;background:#c79e1c;"></div>
<div style="left:1876px;top:169.2px;width:17px;height:2.6px;background:#756d56;"></div>
<div style="left:1876px;top:182.7px;width:17px;height:2.6px;background:#756d56;"></div>
<div style="left:1876px;top:210.3px;width:17px;height:2.6px;background:#756d56;"></div>
<div style="left:1876px;top:241.5px;width:17px;height:2.6px;background:#756d56;"></div>
<div style="left:1876px;top:255.2px;width:17px;height:2.5px;background:#756d56;"></div>
<div style="left:1876px;top:259px;width:17px;height:2.5px;background:#756d56;"></div>
<div style="left:1876px;top:268.8px;width:17px;height:2.6px;background:#756d56;"></div>
<div style="left:1876px;top:278.8px;width:17px;height:2.6px;background:#756d56;"></div>
<div style="left:1876px;top:288.8px;width:17px;height:2.6px;background:#756d56;"></div>
<div style="left:1876px;top:371.2px;width:17px;height:2.4px;background:#756d56;"></div>
<div style="left:1876px;top:385.8px;width:17px;height:2.4px;background:#756d56;"></div>
<div style="left:1876px;top:390.6px;width:17px;height:2.4px;background:#756d56;"></div>
<div style="left:1876px;top:395.8px;width:17px;height:2.4px;background:#756d56;"></div>
<div style="left:1876px;top:410px;width:17px;height:2.5px;background:#756d56;"></div>
<div style="left:1876px;top:420.2px;width:17px;height:2.6px;background:#c79e1c;"></div>
<div style="left:1876px;top:440px;width:17px;height:2.5px;background:#756d56;"></div>
<div style="left:1876px;top:471px;width:17px;height:2.5px;background:#756d56;"></div>
<div style="left:1876px;top:489px;width:17px;height:2.5px;background:#756d56;"></div>
<div style="left:1876px;top:561px;width:17px;height:2.5px;background:#756d56;"></div>
<div style="left:1876px;top:575px;width:17px;height:2.5px;background:#756d56;"></div>
<div style="left:1876px;top:296.5px;width:17px;height:2.2px;background:#756d56;"></div>
<div style="left:1876px;top:299.92px;width:17px;height:2.2px;background:#756d56;"></div>
<div style="left:1876px;top:303.34px;width:17px;height:2.2px;background:#756d56;"></div>
<div style="left:1876px;top:306.76px;width:17px;height:2.2px;background:#756d56;"></div>
<div style="left:1876px;top:310.18px;width:17px;height:2.2px;background:#756d56;"></div>
<div style="left:1876px;top:313.6px;width:17px;height:2.2px;background:#756d56;"></div>
<div style="left:1876px;top:317.02px;width:17px;height:2.2px;background:#756d56;"></div>
<div style="left:1876px;top:320.44px;width:17px;height:2.2px;background:#756d56;"></div>
<div style="left:1876px;top:323.86px;width:17px;height:2.2px;background:#756d56;"></div>
<div style="left:1876px;top:327.28px;width:17px;height:2.2px;background:#756d56;"></div>
<div style="left:1876px;top:352.0px;width:17px;height:2.2px;background:#756d56;"></div>
<div style="left:1876px;top:355.4px;width:17px;height:2.2px;background:#756d56;"></div>
<div style="left:1876px;top:358.8px;width:17px;height:2.2px;background:#756d56;"></div>
<div style="left:1882px;top:518px;width:9.500px;height:59px;background:rgba(120,120,120,.38)"></div>
<div style="left:598px;top:589px;width:1034px;height:10px;background:#4d4d4d;"></div>
<svg style="left:652.0px;top:613.300px" width="5" height="8" viewBox="0 0 5 8"><path d="M.7 .7L3.700 3.900L.7 7.100" stroke="#626567" stroke-width="1" fill="none"/></svg>
<svg style="left:865.0px;top:613.300px" width="5" height="8" viewBox="0 0 5 8"><path d="M.7 .7L3.700 3.900L.7 7.100" stroke="#626567" stroke-width="1" fill="none"/></svg>
<svg style="left:163.800px;top:644px" width="10" height="10" viewBox="0 0 10 10"><path d="M.8 .8L9.200 9.200M9.200 .8L.8 9.200" stroke="#6e7173" stroke-width="1.100" fill="none"/></svg>
<div style="left:106px;top:661px;width:81.500px;height:3.500px;background:#747a80;border-radius:2px"></div>
<svg style="left:199px;top:641.500px" width="14" height="14" viewBox="0 0 14 14"><path d="M7 .5V13.500M.5 7H13.500" stroke="#afb1b3" stroke-width="2.100" fill="none"/></svg>
<svg style="left:231.500px;top:643.500px" width="15" height="10" viewBox="0 0 15 10"><path d="M1.200 1.500L7.500 7.800L13.800 1.500" stroke="#afb1b3" stroke-width="2" fill="none"/></svg>
<svg style="left:1836.4px;top:639.4px" width="17.2" height="17.2" viewBox="0 0 17.2 17.2"><path d="M6.59 3.37L6.83 1.21L10.37 1.21L10.61 3.37L12.12 4.25L14.11 3.37L15.89 6.44L14.13 7.72L14.13 9.48L15.89 10.76L14.11 13.83L12.12 12.95L10.61 13.83L10.37 15.99L6.83 15.99L6.59 13.83L5.08 12.95L3.09 13.83L1.31 10.76L3.07 9.48L3.07 7.72L1.31 6.44L3.09 3.37L5.08 4.25ZM5.40 8.6a3.2 3.2 0 1 0 6.4 0a3.2 3.2 0 1 0 -6.4 0Z" fill="#afb1b3" fill-rule="evenodd" stroke="#afb1b3" stroke-width="0.800" stroke-linejoin="round"/></svg>
<div style="left:1870px;top:647px;width:15.8px;height:2.2px;background:#afb1b3;"></div>
<div style="left:0;top:0;width:1894px;height:966px;overflow:hidden;background:none"><div style="position:absolute;left:0;top:0"><span class="c" style="left:33.0px;top:666.90px;color:#bbbbbb">PS C:\&gt;</span><span class="c" style="left:113.0px;top:666.90px;color:#d6be1e">cd</span><span class="c" style="left:143.0px;top:666.90px;color:#bbbbbb">C:\Users\ANUJ\OneDrive\Desktop\bbdms\</span><span class="c" style="left:33.0px;top:694.40px;color:#bbbbbb">PS C:\Users\ANUJ\OneDrive\Desktop\bbdms&gt;</span><span class="c" style="left:443.0px;top:694.40px;color:#d6be1e">cd</span><span class="c" style="left:473.0px;top:694.40px;color:#bbbbbb">bloodbanksystem</span><span class="c" style="left:33.0px;top:721.90px;color:#bbbbbb">PS C:\Users\ANUJ\OneDrive\Desktop\bbdms\bloodbanksystem&gt;</span><span class="c" style="left:603.0px;top:721.90px;color:#d6be1e">python</span><span class="c" style="left:673.0px;top:721.90px;color:#bbbbbb">manage.py runserver</span></div></div>
<div style="left:862.500px;top:720.500px;width:9.500px;height:26.500px;border:1px solid #c8a91a;"></div>
<div style="left:1882.500px;top:942.500px;width:10px;height:23px;background:#4e4e4e"></div>
<svg style="left:7.400px;top:130.400px" width="14" height="12" viewBox="0 0 14 12"><path d="M0 0H4.800L6.500 1.900H13.800V11.200H0Z" fill="#c4c6c8"/></svg>
<svg style="left:8.200px;top:838.800px" width="13" height="15" viewBox="0 0 13 15"><path d="M0 0H12V14L6 9.300L0 14Z" fill="#afb1b3"/></svg>
<svg style="left:8.200px;top:938.400px" width="13" height="12" viewBox="0 0 13 12" fill="#afb1b3"><rect x="7" y="0" width="5.400" height="5.200"/><rect x="0" y="6.500" width="5.400" height="5.200"/><rect x="7" y="6.500" width="5.400" height="5.200"/></svg>
<svg style="left:1901px;top:86.500px" width="14" height="16" viewBox="0 0 14 16"><path d="M7 .4c3 0 4.600 2.200 4.600 5.200 0 3 .6 4.700 2.200 6.200H.2c1.600-1.500 2.200-3.200 2.200-6.200C2.400 2.600 4 .4 7 .4z" fill="#afb1b3"/><rect x="5.300" y="13" width="3.400" height="1.800" rx=".9" fill="#afb1b3"/></svg>
<div style="left:641.2px;top:967px;width:96px;height:27px;background:#2d2f30;"></div>
<svg style="left:43px;top:974px" width="12" height="16" viewBox="0 0 12 16" fill="none" stroke="#afb1b3"><path d="M2.700 2.500V13.500" stroke-width="2.200"/><path d="M9.200 4.500C9.200 8.200 6 8.500 2.700 10.200" stroke-width="2"/><circle cx="2.700" cy="2.400" r="2.100" fill="#afb1b3" stroke="none"/><circle cx="2.700" cy="13.500" r="2.100" fill="#afb1b3" stroke="none"/><circle cx="9.200" cy="3.600" r="2.100" fill="#afb1b3" stroke="none"/></svg>
<svg style="left:185.500px;top:974px" width="15" height="16" viewBox="0 0 15 16"><path d="M7.400 .3L14.600 4L7.400 7.700L.2 4Z" fill="#afb1b3"/><path d="M.6 7.600L7.400 11.100L14.200 7.600M.6 11.100L7.400 14.600L14.200 11.100" fill="none" stroke="#afb1b3" stroke-width="1.700"/></svg>
<svg style="left:332.200px;top:975.800px" width="13" height="12" viewBox="0 0 13 12" fill="#afb1b3"><rect x="0" y="0" width="2.400" height="2.400"/><rect x="3.900" y="0" width="9" height="2.400"/><rect x="0" y="4.600" width="2.400" height="2.400"/><rect x="3.900" y="4.600" width="9" height="2.400"/><rect x="0" y="9.200" width="2.400" height="2.400"/><rect x="3.900" y="9.200" width="9" height="2.400"/></svg>
<svg style="left:414.800px;top:974.800px" width="15" height="15" viewBox="0 0 15 15" fill="#afb1b3"><path d="M7.200 0C4.800 0 4 .9 4 2.200V4h3.500v.7H2.300C.8 4.700 0 6 0 7.400c0 1.600.8 2.800 2.200 2.800h1.300V8.100c0-1.400 1.100-2.500 2.500-2.500h3.300c1.100 0 2-.9 2-2V2.200C11.300.9 10 0 7.200 0zM5.600 1.200a.75.75 0 110 1.500.75.75 0 010-1.500z"/><path d="M7.500 14.700c2.400 0 3.200-.9 3.200-2.200v-1.800H7.200V10h5.200c1.500 0 2.300-1.300 2.300-2.700 0-1.600-.8-2.800-2.200-2.800h-1.300v2.100c0 1.400-1.100 2.500-2.500 2.500H5.400c-1.100 0-2 .9-2 2v1.400c0 1.300 1.300 2.200 4.100 2.200zM9.100 13.500a.75.75 0 110-1.500.75.75 0 010 1.500z"/></svg>
<svg style="left:554px;top:974px" width="14" height="14" viewBox="0 0 14 14"><circle cx="6.800" cy="6.900" r="6.700" fill="#afb1b3"/><rect x="5.800" y="3" width="2" height="5" fill="#3c3f41"/><rect x="5.800" y="9" width="2" height="2" fill="#3c3f41"/></svg>
<svg style="left:655.700px;top:974.800px" width="15" height="14" viewBox="0 0 15 14"><rect x="0" y="0" width="14.400" height="13.200" fill="#c6c8ca"/><path d="M2.700 3.200L6.200 6.300L2.700 9.400" stroke="#2d2f30" stroke-width="1.500" fill="none"/><rect x="7" y="9.200" width="4.600" height="1.400" fill="#2d2f30"/></svg>
<svg style="left:750.700px;top:974.300px" width="17" height="16" viewBox="0 0 17 16"><path d="M4.200 .3H12L16.100 7.600L12 14.900H4.200L.1 7.600Z" fill="#afb1b3"/><path d="M6.300 4.200L11.800 7.600L6.300 11Z" fill="#3c3f41"/></svg>
<svg style="left:7px;top:1000.500px" width="17" height="16" viewBox="0 0 17 16" fill="none" stroke="#afb1b3" stroke-width="1.300"><rect x="3.700" y=".7" width="11.800" height="11.300"/><path d="M.7 3.700V15H12.500"/></svg>
<svg style="left:1889.500px;top:999.500px" width="17" height="16" viewBox="0 0 17 16"><rect x="5" y="7" width="10.500" height="8" fill="#afb1b3"/><path d="M7.300 7V4.200a2.800 2.800 0 00-5.600 0V6" stroke="#afb1b3" stroke-width="1.700" fill="none"/></svg>
<span class="t" style="left:55.00px;top:8.50px;font-size:15.5px;color:#bbbbbb;transform:scaleX(0.9606);">File</span>
<span class="t" style="left:94.50px;top:8.50px;font-size:15.5px;color:#bbbbbb;transform:scaleX(0.9918);">Edit</span>
<span class="t" style="left:135.50px;top:8.50px;font-size:15.5px;color:#bbbbbb;transform:scaleX(0.9902);">View</span>
<span class="t" style="left:184.50px;top:8.50px;font-size:15.5px;color:#bbbbbb;transform:scaleX(0.9888);">Navigate</span>
<span class="t" style="left:260.50px;top:8.50px;font-size:15.5px;color:#bbbbbb;transform:scaleX(0.9578);">Code</span>
<span class="t" style="left:312.00px;top:8.50px;font-size:15.5px;color:#bbbbbb;transform:scaleX(0.9728);">Refactor</span>
<span class="t" style="left:383.50px;top:8.50px;font-size:15.5px;color:#bbbbbb;transform:scaleX(0.8967);">Run</span>
<span class="t" style="left:424.00px;top:8.50px;font-size:15.5px;color:#bbbbbb;transform:scaleX(1.0225);">Tools</span>
<span class="t" style="left:475.50px;top:8.50px;font-size:15.5px;color:#bbbbbb;transform:scaleX(0.8314);">VCS</span>
<span class="t" style="left:517.00px;top:8.50px;font-size:15.5px;color:#bbbbbb;transform:scaleX(1.0156);">Window</span>
<span class="t" style="left:588.50px;top:8.50px;font-size:15.5px;color:#bbbbbb;transform:scaleX(1.0191);">Help</span>
<span class="t" style="left:659.50px;top:8.50px;font-size:15.5px;color:#7f8284;transform:scaleX(0.9507);">bbdms - userviews.py</span>
<span class="t" style="left:15.00px;top:44.80px;font-size:15.5px;color:#bbbbbb;font-weight:bold;transform:scaleX(0.9446);">bbdms</span>
<span class="t" style="left:83.50px;top:44.80px;font-size:15.5px;color:#bbbbbb;transform:scaleX(0.9741);">bloodbanksystem</span>
<span class="t" style="left:220.50px;top:44.80px;font-size:15.5px;color:#bbbbbb;transform:scaleX(0.9741);">bloodbanksystem</span>
<span class="t" style="left:378.50px;top:44.80px;font-size:15.5px;color:#bbbbbb;transform:scaleX(0.9208);">userviews.py</span>
<span class="t" style="left:1569.20px;top:44.30px;font-size:15.5px;color:#bbbbbb;transform:scaleX(0.9250);">Current File</span>
<span class="t" style="left:67.50px;top:79.80px;font-size:15.5px;color:#bbbbbb;transform:scaleX(0.9741);">Project</span>
<span class="t" style="left:81.00px;top:110.00px;font-size:15.5px;color:#bbbbbb;font-weight:bold;transform:scaleX(0.9486);">bbdms</span>
<span class="t" style="left:103.70px;top:135.00px;font-size:15.5px;color:#bbbbbb;transform:scaleX(0.9708);">bloodbanksystem</span>
<span class="t" style="left:125.80px;top:160.00px;font-size:15.5px;color:#bbbbbb;">bbdmsapp</span>
<span class="t" style="left:125.80px;top:185.00px;font-size:15.5px;color:#bbbbbb;transform:scaleX(0.9724);">bloodbanksystem</span>
<span class="t" style="left:148.80px;top:210.00px;font-size:15.5px;color:#bbbbbb;transform:scaleX(0.8575);">__init__.py</span>
<span class="t" style="left:148.80px;top:235.00px;font-size:15.5px;color:#bbbbbb;transform:scaleX(0.9601);">adminviews.py</span>
<span class="t" style="left:148.80px;top:260.00px;font-size:15.5px;color:#bbbbbb;transform:scaleX(0.9425);">asgi.py</span>
<span class="t" style="left:148.80px;top:285.00px;font-size:15.5px;color:#bbbbbb;transform:scaleX(0.9639);">donorviews.py</span>
<span class="t" style="left:148.80px;top:310.00px;font-size:15.5px;color:#bbbbbb;transform:scaleX(0.9472);">settings.py</span>
<span class="t" style="left:148.80px;top:335.00px;font-size:15.5px;color:#bbbbbb;transform:scaleX(0.9309);">urls.py</span>
<span class="t" style="left:148.80px;top:360.00px;font-size:15.5px;color:#bbbbbb;transform:scaleX(0.9186);">userviews.py</span>
<span class="t" style="left:148.80px;top:385.00px;font-size:15.5px;color:#bbbbbb;transform:scaleX(0.9338);">views.py</span>
<span class="t" style="left:148.80px;top:410.00px;font-size:15.5px;color:#bbbbbb;transform:scaleX(0.9596);">wsgi.py</span>
<span class="t" style="left:125.80px;top:435.00px;font-size:15.5px;color:#bbbbbb;transform:scaleX(0.9948);">media</span>
<span class="t" style="left:125.80px;top:460.00px;font-size:15.5px;color:#bbbbbb;transform:scaleX(0.9810);">static</span>
<span class="t" style="left:125.80px;top:485.00px;font-size:15.5px;color:#bbbbbb;transform:scaleX(0.9880);">templates</span>
<span class="t" style="left:148.80px;top:510.00px;font-size:15.5px;color:#bbbbbb;transform:scaleX(1.0067);">admin</span>
<span class="t" style="left:170.90px;top:535.00px;font-size:15.5px;color:#bbbbbb;transform:scaleX(1.0198);">add-bloodgroup.html</span>
<span class="t" style="left:170.90px;top:560.00px;font-size:15.5px;color:#bbbbbb;transform:scaleX(0.9963);">blood-request.html</span>
<span class="t" style="left:170.90px;top:585.00px;font-size:15.5px;color:#bbbbbb;">br-between-date.html</span>
<span class="t" style="left:170.90px;top:610.00px;font-size:15.5px;color:#bbbbbb;transform:scaleX(1.0057);">donor-list.html</span>
<span class="t" style="left:135.80px;top:110.00px;font-size:15.5px;color:#7f8386;transform:scaleX(0.9636);">C:\Users\ANUJ\OneDrive\Desktop\bbdms</span>
<span class="t" style="left:559.50px;top:79.70px;font-size:15.5px;color:#bbbbbb;transform:scaleX(0.9968);">br-between-date.html</span>
<span class="t" style="left:768.50px;top:79.70px;font-size:15.5px;color:#bbbbbb;transform:scaleX(0.9762);">manage-contactusquery.html</span>
<span class="t" style="left:1024.50px;top:79.70px;font-size:15.5px;color:#bbbbbb;transform:scaleX(0.9836);">index.html</span>
<span class="t" style="left:1158.00px;top:79.70px;font-size:15.5px;color:#bbbbbb;transform:scaleX(1.0068);">templates\donor-list.html</span>
<span class="t" style="left:1389.50px;top:79.70px;font-size:15.5px;color:#bbbbbb;transform:scaleX(0.9423);">search.html</span>
<span class="t" style="left:1528.00px;top:79.70px;font-size:15.5px;color:#bbbbbb;transform:scaleX(0.9208);">userviews.py</span>
<span class="t" style="left:1673.00px;top:79.70px;font-size:15.5px;color:#bbbbbb;transform:scaleX(0.9953);">donor-signup.html</span>
<span class="t" style="left:514.30px;top:111.20px;font-size:17.6px;color:#606366;font-family:'Liberation Mono', monospace;transform:scaleX(0.8331);">111</span>
<span class="t" style="left:514.30px;top:138.70px;font-size:17.6px;color:#a4a3a3;font-family:'Liberation Mono', monospace;transform:scaleX(0.8331);">112</span>
<span class="t" style="left:514.30px;top:166.20px;font-size:17.6px;color:#606366;font-family:'Liberation Mono', monospace;transform:scaleX(0.8331);">113</span>
<span class="t" style="left:514.30px;top:193.70px;font-size:17.6px;color:#606366;font-family:'Liberation Mono', monospace;transform:scaleX(0.8331);">114</span>
<span class="t" style="left:514.30px;top:221.20px;font-size:17.6px;color:#606366;font-family:'Liberation Mono', monospace;transform:scaleX(0.8331);">115</span>
<span class="t" style="left:514.30px;top:248.70px;font-size:17.6px;color:#606366;font-family:'Liberation Mono', monospace;transform:scaleX(0.8331);">116</span>
<span class="t" style="left:514.30px;top:276.20px;font-size:17.6px;color:#606366;font-family:'Liberation Mono', monospace;transform:scaleX(0.8331);">117</span>
<span class="t" style="left:514.30px;top:303.70px;font-size:17.6px;color:#606366;font-family:'Liberation Mono', monospace;transform:scaleX(0.8331);">118</span>
<span class="t" style="left:514.30px;top:331.20px;font-size:17.6px;color:#606366;font-family:'Liberation Mono', monospace;transform:scaleX(0.8331);">119</span>
<span class="t" style="left:514.30px;top:358.70px;font-size:17.6px;color:#606366;font-family:'Liberation Mono', monospace;transform:scaleX(0.8331);">120</span>
<span class="t" style="left:514.30px;top:386.20px;font-size:17.6px;color:#606366;font-family:'Liberation Mono', monospace;transform:scaleX(0.8331);">121</span>
<span class="t" style="left:514.30px;top:413.70px;font-size:17.6px;color:#606366;font-family:'Liberation Mono', monospace;transform:scaleX(0.8331);">122</span>
<span class="t" style="left:514.30px;top:441.20px;font-size:17.6px;color:#606366;font-family:'Liberation Mono', monospace;transform:scaleX(0.8331);">123</span>
<span class="t" style="left:514.30px;top:468.70px;font-size:17.6px;color:#606366;font-family:'Liberation Mono', monospace;transform:scaleX(0.8331);">124</span>
<span class="t" style="left:514.30px;top:496.20px;font-size:17.6px;color:#606366;font-family:'Liberation Mono', monospace;transform:scaleX(0.8331);">125</span>
<span class="t" style="left:514.30px;top:523.70px;font-size:17.6px;color:#606366;font-family:'Liberation Mono', monospace;transform:scaleX(0.8331);">126</span>
<span class="t" style="left:514.30px;top:551.20px;font-size:17.6px;color:#606366;font-family:'Liberation Mono', monospace;transform:scaleX(0.8331);">127</span>
<span class="t" style="left:514.30px;top:578.70px;font-size:17.6px;color:#606366;font-family:'Liberation Mono', monospace;transform:scaleX(0.8331);">128</span>
<span class="t" style="left:1699.70px;top:113.60px;font-size:15.5px;color:#bbbbbb;transform:scaleX(0.9507);">6</span>
<span class="t" style="left:1736.00px;top:113.60px;font-size:15.5px;color:#bbbbbb;transform:scaleX(0.9159);">5</span>
<span class="t" style="left:1773.40px;top:113.60px;font-size:15.5px;color:#bbbbbb;transform:scaleX(0.9275);">54</span>
<span class="t" style="left:1818.30px;top:113.60px;font-size:15.5px;color:#bbbbbb;transform:scaleX(0.9159);">32</span>
<span class="t" style="left:519.40px;top:608.20px;font-size:15px;color:#a9acae;transform:scaleX(0.9256);">SEARCHDONOR()</span>
<span class="t" style="left:667.60px;top:608.20px;font-size:15px;color:#a9acae;">if request.method == &quot;GET&quot;</span>
<span class="t" style="left:879.60px;top:608.20px;font-size:15px;color:#a9acae;transform:scaleX(1.0667);">if bloodgrp or location</span>
<span class="t" style="left:34.70px;top:638.90px;font-size:15.5px;color:#bbbbbb;transform:scaleX(0.9842);">Terminal:</span>
<span class="t" style="left:119.90px;top:638.90px;font-size:15.5px;color:#bbbbbb;transform:scaleX(0.9551);">Local</span>
<span class="t" style="left:15.80px;top:112.90px;font-size:13.5px;color:#ffffff;transform-origin:0 50%;transform:rotate(-90deg) scaleX(0.9636);">Project</span>
<span class="t" style="left:15.80px;top:822.70px;font-size:13.5px;color:#bbbbbb;transform-origin:0 50%;transform:rotate(-90deg) scaleX(0.9462);">Bookmarks</span>
<span class="t" style="left:15.80px;top:920.60px;font-size:13.5px;color:#bbbbbb;transform-origin:0 50%;transform:rotate(-90deg) scaleX(0.9401);">Structure</span>
<span class="t" style="left:1905.40px;top:98.50px;font-size:13px;color:#bbbbbb;transform-origin:0 50%;transform:rotate(90deg) scaleX(1.0182);">Notifications</span>
<span class="t" style="left:63.00px;top:973.90px;font-size:13.3px;color:#bbbbbb;transform:scaleX(1.0053);">Version Control</span>
<span class="t" style="left:205.90px;top:973.90px;font-size:13.3px;color:#bbbbbb;transform:scaleX(0.9401);">Python Packages</span>
<span class="t" style="left:350.80px;top:973.90px;font-size:13.3px;color:#bbbbbb;transform:scaleX(0.9431);">TODO</span>
<span class="t" style="left:434.60px;top:973.90px;font-size:13.3px;color:#bbbbbb;transform:scaleX(0.9681);">Python Console</span>
<span class="t" style="left:573.80px;top:973.90px;font-size:13.3px;color:#bbbbbb;transform:scaleX(0.9880);">Problems</span>
<span class="t" style="left:676.30px;top:973.90px;font-size:13.3px;color:#ffffff;transform:scaleX(0.9910);">Terminal</span>
<span class="t" style="left:772.80px;top:973.90px;font-size:13.3px;color:#bbbbbb;transform:scaleX(0.9275);">Services</span>
<span class="t" style="left:1358.00px;top:997.40px;font-size:15px;color:#bbbbbb;transform:scaleX(0.9662);">112:62 (62 chars, 1 line break)</span>
<span class="t" style="left:1568.00px;top:997.40px;font-size:15px;color:#bbbbbb;transform:scaleX(0.8297);">CRLF</span>
<span class="t" style="left:1615.00px;top:997.40px;font-size:15px;color:#bbbbbb;transform:scaleX(0.9412);">UTF-8</span>
<span class="t" style="left:1669.00px;top:997.40px;font-size:15px;color:#bbbbbb;transform:scaleX(0.9493);">4 spaces</span>
<span class="t" style="left:1740.00px;top:997.40px;font-size:15px;color:#bbbbbb;transform:scaleX(0.9881);">Python 3.11 (bbdms)</span>
<div style="left:1px;top:600px;width:950px;height:175px;border:5px solid #ed1c24;background:none"></div>
</div>
</body></html>
